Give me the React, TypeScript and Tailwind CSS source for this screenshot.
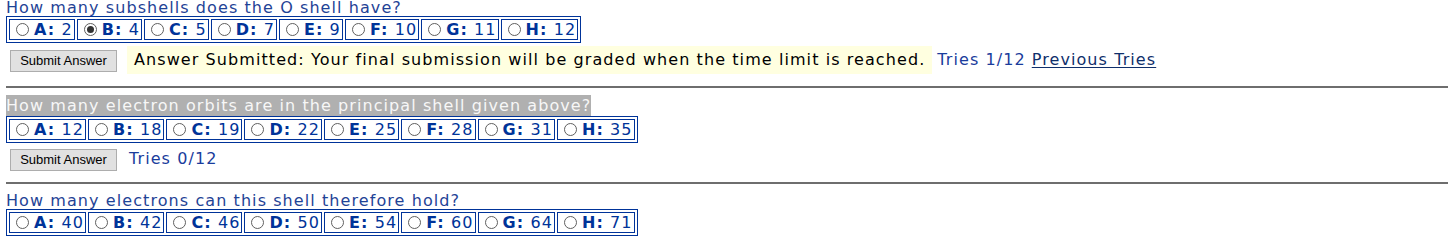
import React from 'react';

// Dados das perguntas
interface Opcao {
  letra: string;
  valor: string;
}

const q1: Opcao[] = [
  { letra: 'A', valor: '2' },
  { letra: 'B', valor: '4' },
  { letra: 'C', valor: '5' },
  { letra: 'D', valor: '7' },
  { letra: 'E', valor: '9' },
  { letra: 'F', valor: '10' },
  { letra: 'G', valor: '11' },
  { letra: 'H', valor: '12' },
];

const q2: Opcao[] = [
  { letra: 'A', valor: '12' },
  { letra: 'B', valor: '18' },
  { letra: 'C', valor: '19' },
  { letra: 'D', valor: '22' },
  { letra: 'E', valor: '25' },
  { letra: 'F', valor: '28' },
  { letra: 'G', valor: '31' },
  { letra: 'H', valor: '35' },
];

const q3: Opcao[] = [
  { letra: 'A', valor: '40' },
  { letra: 'B', valor: '42' },
  { letra: 'C', valor: '46' },
  { letra: 'D', valor: '50' },
  { letra: 'E', valor: '54' },
  { letra: 'F', valor: '60' },
  { letra: 'G', valor: '64' },
  { letra: 'H', valor: '71' },
];

function Radio({ checked }: { checked?: boolean }) {
  return (
    <span className="ml-[5px] mr-[5px] w-[13px] h-[13px] rounded-full border border-[#5f5f5f] bg-white flex items-center justify-center shrink-0">
      {checked && <span className="w-[7px] h-[7px] rounded-full bg-[#333333]" />}
    </span>
  );
}

function Opcoes({ opcoes, marcada }: { opcoes: Opcao[]; marcada?: string }) {
  return (
    <div className="inline-flex gap-[2px] p-[2px] border border-[#003399]">
      {opcoes.map((o) => (
        <div key={o.letra} className="flex items-center border border-[#003399] p-[1px] h-[21px] text-[#003399]">
          <Radio checked={marcada === o.letra} />
          <span className="font-bold">{o.letra}:</span>
          <span>&nbsp;{o.valor}</span>
        </div>
      ))}
    </div>
  );
}

function Botao() {
  return (
    <button className="w-[107px] h-[22px] bg-[#e1e1e1] border border-[#adadad] text-[13px] tracking-normal text-black font-['Liberation_Sans',Arial,sans-serif] leading-none">
      Submit Answer
    </button>
  );
}

export default function App() {
  return (
    <div className="pl-[6px] bg-white text-[16px] tracking-[1.08px] font-['DejaVu_Sans',Verdana,sans-serif] min-h-[240px]">
      {/* Pergunta 1 */}
      <div className="leading-[16px] text-[#1f4396]">How many subshells does the O shell have?</div>
      <Opcoes opcoes={q1} marcada="B" />
      <div className="flex items-center mt-[3px] h-[28px]">
        <span className="ml-[4px]">
          <Botao />
        </span>
        <span className="ml-[10px] h-[28px] px-[7px] bg-[#ffffe0] text-black flex items-center">
          Answer Submitted: Your final submission will be graded when the time limit is reached.
        </span>
        <span className="ml-[5px] text-[#1a3c9c]">Tries 1/12</span>
        <a className="ml-[6px] text-[#0f2f6b] underline underline-offset-2">Previous Tries</a>
      </div>
      <div className="mt-[12px] h-[2px] bg-[#6e6e6e]" />

      {/* Pergunta 2 */}
      <div className="mt-[7px] leading-[21px]">
        <span className="inline-block bg-[#b0b0b0] text-[#f7f7f7]">
          How many electron orbits are in the principal shell given above?
        </span>
      </div>
      <Opcoes opcoes={q2} />
      <div className="flex items-center mt-[5px] h-[22px]">
        <span className="ml-[4px]">
          <Botao />
        </span>
        <span className="ml-[12px] text-[#1a3c9c]">Tries 0/12</span>
      </div>
      <div className="mt-[12px] h-[2px] bg-[#6e6e6e]" />

      {/* Pergunta 3 */}
      <div className="pt-[8px] leading-[17px] text-[#1f4396]">How many electrons can this shell therefore hold?</div>
      <Opcoes opcoes={q3} />
    </div>
  );
}
